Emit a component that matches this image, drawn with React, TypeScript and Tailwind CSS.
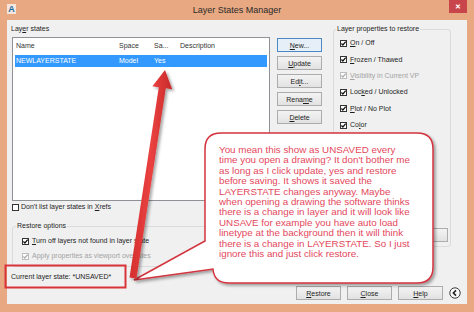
import React from 'react';

const Check = ({ checked = true, disabled = false }: { checked?: boolean; disabled?: boolean }) => (
  <span
    className={`flex w-[7px] h-[7px] shrink-0 items-center justify-center border bg-white ${
      disabled ? 'border-[#bdbdbd]' : 'border-[#333]'
    }`}
  >
    {checked && (
      <svg viewBox="0 0 5 5" className="w-[5px] h-[5px] overflow-visible">
        <path d="M0.4 2.5 L1.9 4 L4.7 0.6" fill="none" stroke={disabled ? '#ababab' : '#111'} strokeWidth="1.2" />
      </svg>
    )}
  </span>
);

const Btn = ({ children, primary = false, w = 'w-[45px]' }: { children?: React.ReactNode; primary?: boolean; w?: string }) => (
  <div
    className={`${w} h-[14px] shrink-0 flex items-center justify-center border text-[7px] leading-none text-[#1e1e1e] ${
      primary ? 'border-[#4a8bc7] bg-[#e6eef7]' : 'border-[#acacac] bg-linear-to-b from-[#f3f3f3] to-[#e2e2e2]'
    }`}
  >
    {children}
  </div>
);

const Row = ({ children, disabled = false }: { children: React.ReactNode; disabled?: boolean }) => (
  <div className={`h-[16.4px] flex items-center gap-[3px] pl-[4px] ${disabled ? 'text-[#a3a3a3]' : ''}`}>
    <Check disabled={disabled} />
    <span>{children}</span>
  </div>
);

const calloutLines = [
  'You mean this show as UNSAVED every',
  "time you open a drawing? It don't bother me",
  'as long as I click update, yes and restore',
  'before saving. It shows it saved the',
  'LAYERSTATE changes anyway. Maybe',
  'when opening a drawing the software thinks',
  'there is a change in layer and it will look like',
  'UNSAVE for example you have auto load',
  'linetype at the background then it will think',
  'there is a change in LAYERSTATE. So I just',
  'ignore this and just click restore.',
];

export default function App() {
  return (
    <div className="relative w-[474px] h-[312px] overflow-hidden bg-[#e8a882] font-['Liberation_Sans',Arial,sans-serif]">
      {/* Title bar */}
      <div className="h-[20px] flex items-start">
        <div className="w-[40px] pl-[7px] pt-[4px]">
          <span className="flex w-[9px] h-[10px] items-center justify-center bg-[#f4e6dc] text-[9px] font-bold leading-none text-[#1b6aa0]">
            A
          </span>
        </div>
        <div className="flex-1 text-center text-[9px] leading-[20px] text-[#2a2a2a]">Layer States Manager</div>
        <div className="w-[40px] flex justify-end pr-[7px]">
          <div className="w-[18px] h-[13px] flex items-center justify-center bg-[#c8454b] text-[7px] font-bold leading-none text-white">
            ✕
          </div>
        </div>
      </div>

      {/* Client area */}
      <div className="mx-[7px] h-[284px] bg-[#f0f0f0] flex flex-col text-[7px] leading-[10px] text-[#1e1e1e]">
        <div className="flex">
          <div className="w-[318px] flex flex-col">
            <div className="flex">
              <div className="w-[263px] pl-[4px]">
                <div className="mt-[4px] h-[13px]">
                  Lay<u>e</u>r states
                </div>
                <div className="ml-[1px] w-[258px] h-[164px] border border-[#8e9297] bg-white">
                  <div className="h-[15px] flex items-center pl-[3px] text-[#333]">
                    <span className="w-[103px]">Name</span>
                    <span className="w-[35px]">Space</span>
                    <span className="w-[26px]">Sa...</span>
                    <span>Description</span>
                  </div>
                  <div className="mt-[2px] mx-[2px] h-[12px] flex items-center pl-[1px] bg-[#3399ff] text-white">
                    <span className="w-[103px]">NEWLAYERSTATE</span>
                    <span className="w-[35px]">Model</span>
                    <span className="w-[26px]">Yes</span>
                  </div>
                </div>
              </div>
              <div className="ml-[7px] pt-[18px] flex flex-col gap-[4px]">
                <Btn primary>
                  <u>N</u>ew...
                </Btn>
                <Btn>
                  <u>U</u>pdate
                </Btn>
                <Btn>
                  Ed<u>i</u>t...
                </Btn>
                <Btn>
                  Rena<u>m</u>e
                </Btn>
                <Btn>
                  <u>D</u>elete
                </Btn>
              </div>
            </div>

            <div className="ml-[5px] h-[12px] flex items-center gap-[2px]">
              <Check checked={false} />
              <span>
                Don't list layer states in <u>X</u>refs
              </span>
            </div>

            <fieldset className="ml-[5px] mt-[8px] w-[313px] h-[46px] border border-[#dcdcdc] rounded-[3px] px-[3px]">
              <legend className="px-[1px] leading-[10px]">Restore options</legend>
              <div className="mt-[2.5px] h-[15px] flex items-center gap-[3px] pl-[6px]">
                <Check />
                <span>
                  <u>T</u>urn off layers not found in layer state
                </span>
              </div>
              <div className="h-[15px] flex items-center gap-[3px] pl-[6px] text-[#a3a3a3]">
                <Check disabled />
                <span>Apply properties as viewport overrides</span>
              </div>
            </fieldset>
          </div>

          <fieldset className="ml-[8px] mt-[4px] w-[118px] h-[223px] border border-[#dcdcdc] rounded-[3px] px-[2px]">
            <legend className="px-[1px] leading-[10px]">Layer properties to restore</legend>
            <div className="mt-[1px] h-[180px]">
              <Row>
                <u>O</u>n / Off
              </Row>
              <Row>
                <u>F</u>rozen / Thawed
              </Row>
              <Row disabled>
                <u>V</u>isibility in Current VP
              </Row>
              <Row>
                Loc<u>k</u>ed / Unlocked
              </Row>
              <Row>
                <u>P</u>lot / No Plot
              </Row>
              <Row>
                Co<u>l</u>or
              </Row>
            </div>
            <div className="mt-[13px] flex justify-between pl-[2px]">
              <Btn w="w-[52px]" />
              <Btn w="w-[52px]" />
            </div>
          </fieldset>
        </div>

        <div className="mt-[5px] h-[10px] pl-[4px]">Current layer state: *UNSAVED*</div>

        <div className="mt-[4px] flex items-center justify-end gap-[6px] pr-[6px]">
          <Btn>
            <u>R</u>estore
          </Btn>
          <Btn>
            <u>C</u>lose
          </Btn>
          <Btn>
            <u>H</u>elp
          </Btn>
          <svg viewBox="0 0 12 12" className="w-[12px] h-[12px]">
            <circle cx="6" cy="6" r="5.2" fill="#fafafa" stroke="#3a3a3a" strokeWidth="1" />
            <path d="M7 3.4 L4.4 6 L7 8.6" fill="none" stroke="#222" strokeWidth="1.6" />
          </svg>
        </div>
      </div>

      {/* Annotations drawn over the dialog */}
      <svg className="pointer-events-none absolute left-0 top-0" width="474" height="312" viewBox="0 0 474 312">
        <defs>
          <filter id="shadow" x="-10%" y="-10%" width="125%" height="125%">
            <feDropShadow dx="2" dy="2" stdDeviation="1.5" floodColor="#000" floodOpacity="0.35" />
          </filter>
          <linearGradient id="arrow" x1="0" y1="0" x2="1" y2="0">
            <stop offset="0" stopColor="#d42f2f" />
            <stop offset="0.5" stopColor="#ea4141" />
            <stop offset="1" stopColor="#c92a2a" />
          </linearGradient>
        </defs>
        <path
          d="M221 133 H417 Q433 133 433 149 V267 Q433 283 417 283 H229 Q214 283 213 269 L134 280 L205 241 V149 Q205 133 221 133 Z"
          fill="#ffffff"
          stroke="#d3343f"
          strokeWidth="1.5"
          filter="url(#shadow)"
        />
        <rect x="5.5" y="265.5" width="120" height="22" fill="none" stroke="#d8343a" strokeWidth="2" />
        <polygon
          points="129.5,277.5 158.8,87.3 152.4,86.3 165,70 172.2,89.3 165.8,88.3 136.5,278.5"
          fill="url(#arrow)"
          filter="url(#shadow)"
        />
      </svg>

      <div className="absolute left-[219px] top-[145px] text-[9.8px] leading-[10.4px] text-[#e4485c] whitespace-nowrap">
        {calloutLines.map((l) => (
          <div key={l}>{l}</div>
        ))}
      </div>
    </div>
  );
}
